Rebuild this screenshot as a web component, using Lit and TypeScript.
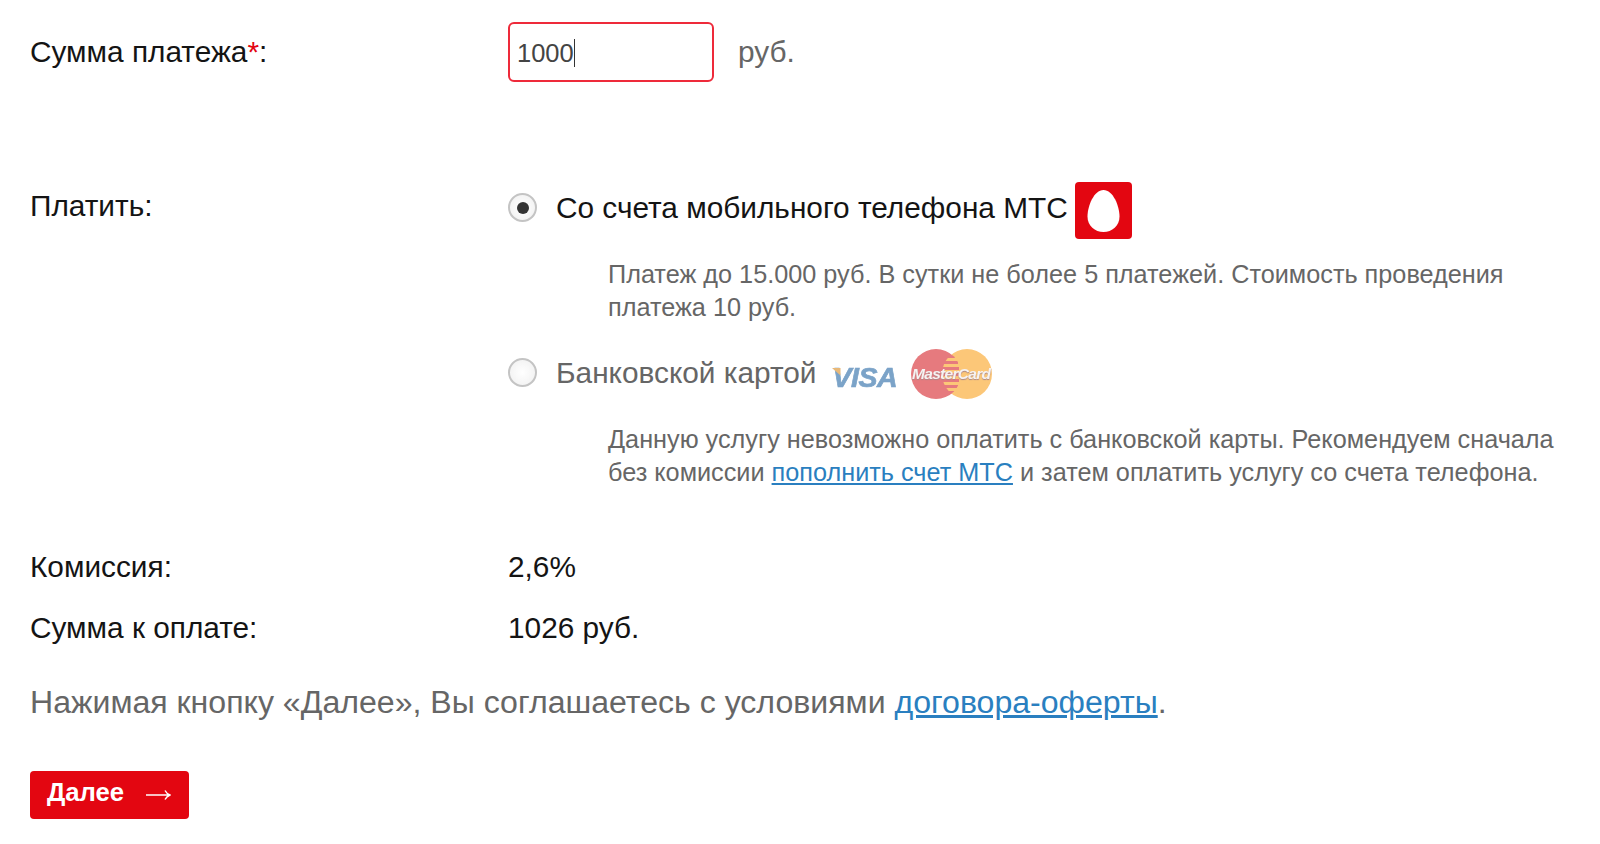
import { LitElement, html, css } from "lit";
import { customElement } from "lit/decorators.js";

@customElement("app-root")
export class AppRoot extends LitElement {
  static styles = css`
    :host { display: block; width: 1600px; height: 844px; overflow: hidden; background: #fff; color: #141414;
      font-family: "Liberation Sans", Arial, sans-serif; font-size: 29.8px; box-sizing: border-box; padding: 22px 0 0 30px; }
    .row { display: grid; grid-template-columns: 478px 1fr; align-items: start; }
    .label { line-height: 34px; }
    .req { color: #e30611; }
    .amount { display: flex; align-items: center; height: 60px; }
    .label.first { padding-top: 13px; }
    .input { box-sizing: border-box; width: 206px; height: 60px; border: 2px solid #ee2a3a; border-radius: 6px; display: flex; align-items: center;
      padding: 2px 0 0 7px; font-size: 25.5px; color: #444; }
    .caret { width: 1.5px; height: 28px; background: #333; }
    .unit { margin-left: 24px; color: #666; }
    .pay { margin-top: 100px; }
    .pay .label { padding-top: 7px; }
    .opt { display: flex; align-items: center; height: 57px; }
    .lift { padding-bottom: 5px; }
    .radio { box-sizing: border-box; width: 29px; height: 29px; border-radius: 50%; border: 2.5px solid #c4c4c4; background: radial-gradient(circle, #fff, #efefef);
      display: flex; align-items: center; justify-content: center; margin: 0 19px 6px 0; flex: none; filter: blur(0.5px); }
    .opt2 .radio { margin-bottom: 4px; }
    .dot { width: 12px; height: 12px; border-radius: 50%; background: #333; }
    .muted { color: #666; padding-bottom: 2px; }
    .mts { margin-left: 7px; flex: none; display: block; filter: blur(0.4px); }
    .desc { margin: 19px 0 0 100px; font-size: 25.26px; line-height: 33px; color: #666; white-space: nowrap; }
    .opt2 { margin-top: 25px; height: 50px; }
    .visa { margin: 6px 0 0 16px; font: italic bold 28.5px "Liberation Sans", sans-serif; color: #7ba3c8; -webkit-text-stroke: 0.7px #7ba3c8; letter-spacing: -0.5px; filter: blur(0.6px); position: relative; }
    .visa::before { content: ""; position: absolute; left: -1px; top: 7px; width: 9px; height: 8px; background: #e8b878; clip-path: polygon(0 0, 100% 0, 100% 100%); }
    .desc2 { margin-top: 24px; }
    a { color: #2a7fc0; text-decoration: underline; }
    .mc { margin: 0 0 0 14px; position: relative; width: 81px; height: 50px; flex: none; display: block; }
    .mc svg { display: block; filter: blur(0.5px); }
    .mc-t { position: absolute; left: 1px; top: 16px; font: italic bold 15.5px "Liberation Sans", sans-serif; color: #f6f2f2; letter-spacing: -0.7px; white-space: nowrap; text-shadow: 0 1px 1px #a88; filter: blur(0.4px); }
    .fee { margin-top: 61px; }
    .total { margin-top: 27px; }
    .note { margin-top: 40px; color: #666; font-size: 32.1px; line-height: 34px; }
    .btn { margin-top: 52px; width: 159px; height: 48px; box-sizing: border-box; background: #e30611; border-radius: 4px; color: #fff; display: flex; align-items: center;
      padding: 0 0 5px 17px; font-weight: bold; font-size: 25.7px; }
    .arrow { margin: 5px 0 0 22px; display: block; }
  `;

  render() {
    return html`
      <div class="row">
        <div class="label first">Сумма платежа<span class="req">*</span>:</div>
        <div class="amount">
          <div class="input">1000<span class="caret"></span></div>
          <span class="unit">руб.</span>
        </div>
      </div>
      <div class="row pay">
        <div class="label">Платить:</div>
        <div>
          <div class="opt">
            <span class="radio"><span class="dot"></span></span>
            <span class="lift">Со счета мобильного телефона МТС</span>
            <svg class="mts" width="57" height="57" viewBox="0 0 57 57">
              <rect width="57" height="57" rx="4" fill="#e30611"/>
              <path d="M28.5 8C19 8 12.5 24 12.5 34.5 12.5 44 20 50 28.5 50S44.5 44 44.5 34.5C44.5 24 38 8 28.5 8Z" fill="#fff"/>
            </svg>
          </div>
          <div class="desc">Платеж до 15.000 руб. В сутки не более 5 платежей. Стоимость проведения<br>платежа 10 руб.</div>
          <div class="opt opt2">
            <span class="radio"></span>
            <span class="muted">Банковской картой</span>
            <span class="visa">VISA</span>
            <span class="mc">
              <svg width="81" height="50" viewBox="0 0 81 50">
                <defs><clipPath id="mcl"><circle cx="25" cy="25" r="25"/></clipPath></defs>
                <circle cx="25" cy="25" r="25" fill="#e67a7e"/>
                <circle cx="56" cy="25" r="25" fill="#fcc778"/>
                <g clip-path="url(#mcl)" fill="#e67a7e">
                  <rect x="31" y="6" width="14" height="3"/><rect x="31" y="12" width="16" height="3"/>
                  <rect x="31" y="18" width="17" height="3"/><rect x="31" y="24" width="17" height="3"/>
                  <rect x="31" y="30" width="17" height="3"/><rect x="31" y="36" width="16" height="3"/>
                  <rect x="31" y="42" width="14" height="3"/>
                </g>
              </svg>
              <span class="mc-t">MasterCard</span>
            </span>
          </div>
          <div class="desc desc2">Данную услугу невозможно оплатить с банковской карты. Рекомендуем сначала<br>без комиссии <a href="#">пополнить счет МТС</a> и затем оплатить услугу со счета телефона.</div>
        </div>
      </div>
      <div class="row fee"><div class="label">Комиссия:</div><div class="label">2,6%</div></div>
      <div class="row total"><div class="label">Сумма к оплате:</div><div class="label">1026 руб.</div></div>
      <div class="note">Нажимая кнопку «Далее», Вы соглашаетесь с условиями <a href="#">договора-оферты</a>.</div>
      <div class="btn">Далее<svg class="arrow" width="25" height="12" viewBox="0 0 25 12" fill="none" stroke="#fff" stroke-width="1.4"><path d="M0 6H24M19 1.5C20 3.5 22 5.2 24 6 22 6.8 20 8.5 19 10.5"/></svg></div>
    `;
  }
}
